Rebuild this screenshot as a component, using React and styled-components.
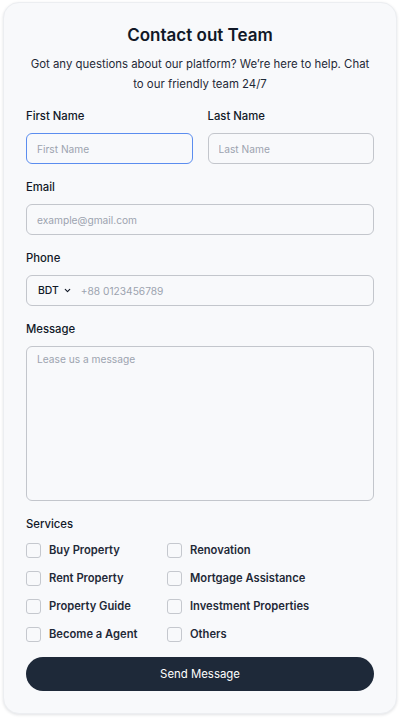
import React from "react";
import styled, { createGlobalStyle } from "styled-components";

const Global = createGlobalStyle`
  * { box-sizing: border-box; }
  html, body { margin: 0; padding: 0; background: #ffffff; }
  body { font-family: Inter, "Noto Sans", "Liberation Sans", sans-serif; -webkit-font-smoothing: antialiased; }
`;

const Page = styled.div`
  padding: 2px 3px 6px 3px;
`;

const Card = styled.form`
  width: 394px;
  background: #f8f9fb;
  border: 1px solid #eceef1;
  border-radius: 16px;
  box-shadow: 0 1px 3px rgba(15, 23, 42, 0.12);
  padding: 20px 22px 22px 22px;
  display: flex;
  flex-direction: column;
`;

const Title = styled.h1`
  margin: 0;
  font-size: 17px;
  line-height: 24px;
  font-weight: 600;
  color: #111827;
  text-align: center;
`;

const Subtitle = styled.p`
  margin: 7px 0 0 0;
  font-size: 11.4px;
  line-height: 20px;
  color: #1f2937;
  text-align: center;
`;

const Fields = styled.div`
  margin-top: 14px;
  display: flex;
  flex-direction: column;
  gap: 15px;
`;

const Row = styled.div`
  display: grid;
  grid-template-columns: 1fr 1fr;
  gap: 15px;
`;

const Field = styled.label`
  display: flex;
  flex-direction: column;
  gap: 9px;
`;

const Label = styled.span`
  font-size: 11.3px;
  line-height: 16px;
  font-weight: 500;
  color: #111827;
`;

const Input = styled.input`
  height: 31px;
  width: 100%;
  border: 1px solid ${(p) => (p.$focused ? "#5b8def" : "#c3c6cc")};
  border-radius: 6px;
  background: #f8f9fb;
  padding: 0 10px;
  font-family: inherit;
  font-size: 10.2px;
  color: #111827;
  outline: none;
  &::placeholder { color: #9ca3af; }
`;

const PhoneBox = styled.div`
  height: 31px;
  border: 1px solid #c3c6cc;
  border-radius: 6px;
  display: flex;
  align-items: center;
  padding: 0 11px;
`;

const Country = styled.span`
  display: flex;
  align-items: center;
  gap: 4px;
  font-size: 10.4px;
  font-weight: 500;
  color: #111827;
  margin-right: 9px;
`;

const PhoneInput = styled.input`
  flex: 1;
  border: none;
  background: transparent;
  outline: none;
  padding: 0;
  font-family: inherit;
  font-size: 10.2px;
  color: #111827;
  &::placeholder { color: #9ca3af; }
`;

const TextArea = styled.textarea`
  height: 155px;
  width: 100%;
  resize: none;
  border: 1px solid #c3c6cc;
  border-radius: 6px;
  background: #f8f9fb;
  padding: 6px 10px;
  font-family: inherit;
  font-size: 10.2px;
  color: #111827;
  outline: none;
  &::placeholder { color: #9ca3af; }
`;

const Services = styled.div`
  display: flex;
  flex-direction: column;
  gap: 8px;
`;

const ServiceGrid = styled.div`
  display: grid;
  grid-template-columns: 141px 1fr;
  row-gap: 8px;
`;

const Option = styled.label`
  display: flex;
  align-items: center;
  gap: 8px;
  height: 20px;
  font-size: 11.2px;
  font-weight: 600;
  color: #1f2937;
`;

const Box = styled.span`
  width: 15px;
  height: 15px;
  border: 1px solid #c5c8ce;
  border-radius: 3px;
  background: #f8f9fb;
  flex-shrink: 0;
`;

const Send = styled.button`
  margin-top: 13px;
  height: 34px;
  width: 100%;
  border: none;
  border-radius: 17px;
  background: #1e2939;
  color: #ffffff;
  font-family: inherit;
  font-size: 11.4px;
  font-weight: 400;
`;

const services = [
  "Buy Property",
  "Renovation",
  "Rent Property",
  "Mortgage Assistance",
  "Property Guide",
  "Investment Properties",
  "Become a Agent",
  "Others",
];

const Chevron = () => (
  <svg width="9" height="9" viewBox="0 0 24 24" fill="none" stroke="#111827" strokeWidth="3" strokeLinecap="round" strokeLinejoin="round">
    <path d="M6 9l6 6 6-6" />
  </svg>
);

export default function App() {
  return (
    <>
      <Global />
      <Page>
        <Card onSubmit={(e) => e.preventDefault()}>
          <Title>Contact out Team</Title>
          <Subtitle>
            Got any questions about our platform? We’re here to help. Chat
            <br />
            to our friendly team 24/7
          </Subtitle>
          <Fields>
            <Row>
              <Field>
                <Label>First Name</Label>
                <Input $focused placeholder="First Name" />
              </Field>
              <Field>
                <Label>Last Name</Label>
                <Input placeholder="Last Name" />
              </Field>
            </Row>
            <Field>
              <Label>Email</Label>
              <Input placeholder="example@gmail.com" />
            </Field>
            <Field as="div">
              <Label>Phone</Label>
              <PhoneBox>
                <Country>
                  BDT <Chevron />
                </Country>
                <PhoneInput placeholder="+88 0123456789" />
              </PhoneBox>
            </Field>
            <Field>
              <Label>Message</Label>
              <TextArea placeholder="Lease us a message" />
            </Field>
            <Services>
              <Label>Services</Label>
              <ServiceGrid>
                {services.map((s) => (
                  <Option key={s}>
                    <Box />
                    {s}
                  </Option>
                ))}
              </ServiceGrid>
            </Services>
          </Fields>
          <Send type="submit">Send Message</Send>
        </Card>
      </Page>
    </>
  );
}
